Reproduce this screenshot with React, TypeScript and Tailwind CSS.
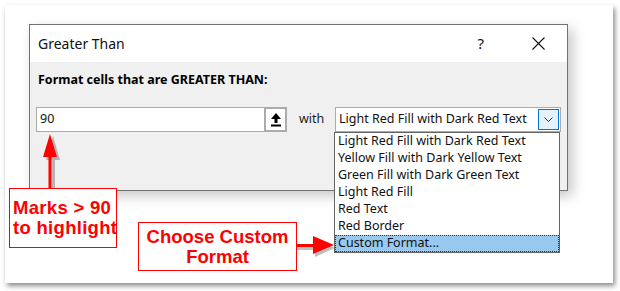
import React from "react";

const options = [
  "Light Red Fill with Dark Red Text",
  "Yellow Fill with Dark Yellow Text",
  "Green Fill with Dark Green Text",
  "Light Red Fill",
  "Red Text",
  "Red Border",
  "Custom Format...",
];

function UploadIcon() {
  return (
    <svg width="10" height="14" viewBox="0 0 10 14">
      <polygon points="5,0 10,6 6.5,6 6.5,10 3.5,10 3.5,6 0,6" fill="#000" />
      <rect x="0" y="11.5" width="10" height="2" fill="#000" />
    </svg>
  );
}

function Chevron() {
  return (
    <svg width="9" height="5" viewBox="0 0 9 5">
      <polyline points="0.5,0.5 4.5,4.5 8.5,0.5" fill="none" stroke="#333" strokeWidth="1" />
    </svg>
  );
}

function CloseIcon() {
  return (
    <svg width="13" height="13" viewBox="0 0 13 13">
      <line x1="0.5" y1="0.5" x2="12.5" y2="12.5" stroke="#111" strokeWidth="1.1" />
      <line x1="12.5" y1="0.5" x2="0.5" y2="12.5" stroke="#111" strokeWidth="1.1" />
    </svg>
  );
}

export default function App() {
  return (
    <div className="relative w-[620px] h-[291px] bg-white overflow-hidden font-['Noto_Sans',sans-serif]">
      {/* outer frame */}
      <div className="ml-[5px] mt-[5px] w-[608px] h-[278px] bg-white shadow-[2px_3px_5px_rgba(0,0,0,0.45)] pt-[19px] pl-[24px]">
        {/* dialog */}
        <div className="w-[539px] h-[167px] border border-[#727272] flex flex-col shadow-[5px_5px_12px_rgba(0,0,0,0.22)]">
          <div className="h-[37px] bg-white flex items-center pl-[8px] pr-[22px]">
            <span className="flex-1 text-[14px] text-[#111] leading-none">Greater Than</span>
            <span className="text-[15px] text-[#111] leading-none mr-[48px]">?</span>
            <CloseIcon />
          </div>
          <div className="flex-1 bg-[#f0f0f0] px-[6px] pt-[9px]">
            <div className="ml-[2px] h-[18px] flex items-center text-[12.5px] font-bold text-black">
              Format cells that are GREATER THAN:
            </div>
            <div className="mt-[18px] flex items-center">
              <div className="w-[251px] h-[25px] flex border border-[#ababab] bg-white">
                <div className="flex-1 flex items-center pl-[3px] text-[12.5px] text-[#111]">90</div>
                <div className="w-[23px] -my-[1px] -mr-[1px] border-2 border-[#ababab] bg-white flex items-center justify-center">
                  <UploadIcon />
                </div>
              </div>
              <span className="ml-[12px] w-[36px] text-[12.5px] text-[#222]">with</span>
              <div className="w-[226px] h-[25px] border border-[#ababab] bg-white flex items-center pl-[3px] pr-[1px]">
                <span className="flex-1 text-[12.5px] text-[#111] whitespace-nowrap">
                  Light Red Fill with Dark Red Text
                </span>
                <div className="w-[21px] h-[21px] bg-[#e5f1fb] border border-[#0078d7] flex items-center justify-center">
                  <Chevron />
                </div>
              </div>
            </div>
          </div>
        </div>
      </div>

      {/* open dropdown list */}
      <div className="absolute left-[334px] top-[132px] w-[226px] h-[121px] border border-[#646464] bg-white flex flex-col">
        {options.map((o, i) => (
          <div
            key={o}
            className={
              i === options.length - 1
                ? "h-[17px] flex items-center pl-[2px] text-[12.5px] text-[#111] whitespace-nowrap bg-[#99c9ef] border border-dotted border-[#333]"
                : "h-[17px] flex items-center pl-[3px] text-[12.5px] text-[#111] whitespace-nowrap"
            }
          >
            {o}
          </div>
        ))}
      </div>

      {/* annotation: marks > 90 */}
      <svg className="absolute left-[40px] top-[132px]" width="22" height="58" viewBox="0 0 22 58">
        <polygon points="11,2 18,26 13,26 13,58 10,58 10,26 4,26" fill="rgba(0,0,0,0.25)" transform="translate(2,2)" />
        <polygon points="10,2 17,25 11.5,25 11.5,56 8.5,56 8.5,25 3,25" fill="#ff0000" />
      </svg>
      <div className="absolute left-[9px] top-[188px] w-[108px] h-[60px] border border-[#ff0000] bg-white flex flex-col justify-center pl-[3px] whitespace-nowrap font-['Liberation_Sans',Arial,sans-serif] font-bold text-[18.5px] leading-[20px] tracking-[0.3px] text-[#ff0000]">
        <span>Marks &gt; 90</span>
        <span>to highlight</span>
      </div>

      {/* annotation: choose custom format */}
      <svg className="absolute left-[296px] top-[234px]" width="40" height="24" viewBox="0 0 40 24">
        <polygon points="0,11 18,11 18,3 38,12 18,21 18,14 0,14" fill="rgba(0,0,0,0.25)" transform="translate(1,2)" />
        <polygon points="0,10 17,10 17,2 38,11 17,20 17,13 0,13" fill="#ff0000" />
      </svg>
      <div className="absolute left-[138px] top-[222px] w-[159px] h-[49px] border border-[#ff0000] bg-white flex flex-col items-center justify-center font-['Liberation_Sans',Arial,sans-serif] font-bold text-[18.5px] leading-[20px] text-[#ff0000]">
        <span>Choose Custom</span>
        <span>Format</span>
      </div>
    </div>
  );
}
